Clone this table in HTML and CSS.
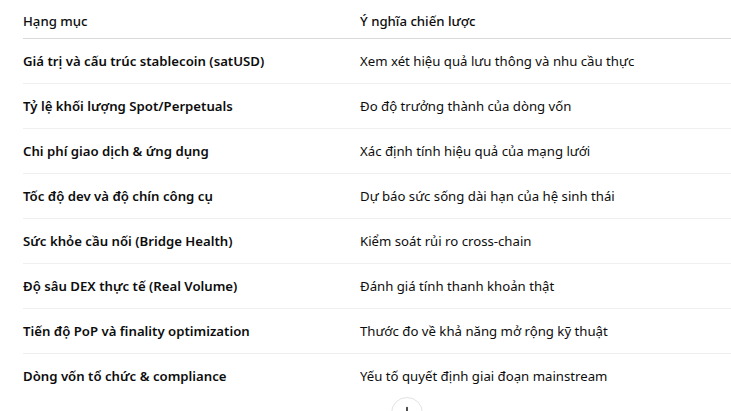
FILE: index.html
```html
<!DOCTYPE html>
<html lang="vi">
<head>
<meta charset="utf-8">
<link rel="stylesheet" href="styles.css">
</head>
<body>
<div class="wrap">
  <table class="tbl">
    <thead>
      <tr><th class="c1">Hạng mục</th><th>Ý nghĩa chiến lược</th></tr>
    </thead>
    <tbody>
      <tr><td class="c1">Giá trị và cấu trúc stablecoin (satUSD)</td><td>Xem xét hiệu quả lưu thông và nhu cầu thực</td></tr>
      <tr><td class="c1">Tỷ lệ khối lượng Spot/Perpetuals</td><td>Đo độ trưởng thành của dòng vốn</td></tr>
      <tr><td class="c1">Chi phí giao dịch &amp; ứng dụng</td><td>Xác định tính hiệu quả của mạng lưới</td></tr>
      <tr><td class="c1">Tốc độ dev và độ chín công cụ</td><td>Dự báo sức sống dài hạn của hệ sinh thái</td></tr>
      <tr><td class="c1">Sức khỏe cầu nối (Bridge Health)</td><td>Kiểm soát rủi ro cross-chain</td></tr>
      <tr><td class="c1">Độ sâu DEX thực tế (Real Volume)</td><td>Đánh giá tính thanh khoản thật</td></tr>
      <tr><td class="c1">Tiến độ PoP và finality optimization</td><td>Thước đo về khả năng mở rộng kỹ thuật</td></tr>
      <tr><td class="c1">Dòng vốn tổ chức &amp; compliance</td><td>Yếu tố quyết định giai đoạn mainstream</td></tr>
    </tbody>
  </table>
</div>
<button class="scroll-btn" aria-label="Scroll down">
  <svg width="16" height="16" viewBox="0 0 16 16" fill="none" stroke="#222" stroke-width="1.6" stroke-linecap="round" stroke-linejoin="round"><path d="M8 2.5v11M3.5 9l4.5 4.5L12.5 9"/></svg>
</button>
</body>
</html>
```
FILE: styles.css
```css
html, body {
  margin: 0;
  padding: 0;
  background: #fff;
  overflow: hidden;
  height: 411px;
}
body {
  font-family: "Noto Sans", "Open Sans", sans-serif;
  color: #0d0d0d;
  position: relative;
}
.wrap {
  padding-left: 23px;
  width: 708px;
}
.tbl {
  border-collapse: collapse;
  width: 100%;
  font-size: 13.2px;
  table-layout: fixed;
}
.tbl th {
  text-align: left;
  font-weight: 500;
  height: 38px;
  padding: 5px 0 0 0;
  border-bottom: 1px solid #d9d9d9;
  box-sizing: border-box;
  line-height: 20px;
}
.tbl td {
  height: 45px;
  padding: 1px 0 0 0;
  border-bottom: 1px solid #efefef;
  box-sizing: border-box;
  line-height: 20px;
  vertical-align: middle;
  white-space: nowrap;
}
.tbl .c1 {
  width: 337px;
}
.tbl td.c1 {
  font-weight: 600;
}
.tbl tbody tr:last-child td {
  border-bottom: none;
}
.scroll-btn {
  position: absolute;
  left: 391px;
  top: 397px;
  width: 32px;
  height: 32px;
  border-radius: 50%;
  border: 1px solid #e3e3e3;
  background: #fff;
  display: flex;
  align-items: center;
  justify-content: center;
  padding: 0;
}
```
